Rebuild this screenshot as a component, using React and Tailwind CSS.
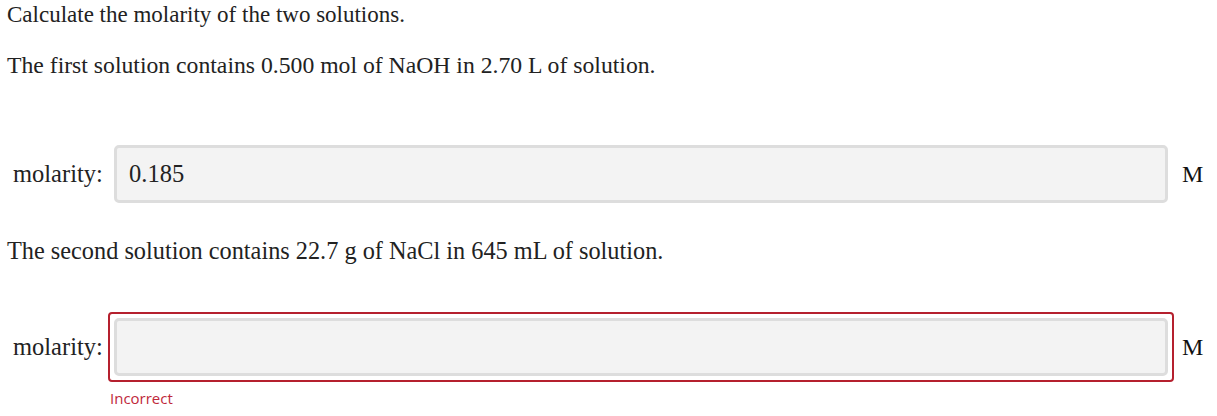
import React from 'react';

const serif = { fontFamily: '"Liberation Serif", "Times New Roman", serif' };

const AnswerRow = ({ value, incorrect }) => {
  return (
    <div className="flex flex-col">
      <div className="flex items-center">
        <label className="w-[108px] shrink-0 pl-[13px] text-[24.5px] text-[#222]">molarity:</label>
        <div
          className={
            'flex-1 rounded-[4px] border-2 p-1 ' +
            (incorrect ? 'border-[#b5202e]' : 'border-transparent')
          }
        >
          <input
            type="text"
            defaultValue={value}
            className="block h-[58px] w-full rounded-[5px] border-[3px] border-[#dddddd] bg-[#f3f3f3] px-3 text-[24.5px] text-[#222] outline-none"
            style={serif}
          />
        </div>
        <span className="w-[43px] shrink-0 pl-2 text-[24px] text-[#111]">M</span>
      </div>
      {incorrect && (
        <div className="pl-[110px] pt-[8px] text-[15px] leading-[16px] text-[#c0283a]" style={{ fontFamily: '"Open Sans", "Liberation Sans", sans-serif' }}>
          Incorrect
        </div>
      )}
    </div>
  );
};

const App = () => {
  return (
    <div className="w-[1217px] h-[416px] bg-white overflow-hidden" style={serif}>
      <p className="pl-[7px] text-[23px] leading-[30px] text-[#222]">Calculate the molarity of the two solutions.</p>
      <p className="mt-[20px] pl-[7px] text-[23.7px] leading-[30px] text-[#222]">
        The first solution contains 0.500 mol of NaOH in 2.70 L of solution.
      </p>

      <div className="mt-[59px]">
        <AnswerRow value="0.185" />
      </div>

      <p className="mt-[27px] pl-[7px] text-[24.3px] leading-[30px] text-[#222]">
        The second solution contains 22.7 g of NaCl in 645 mL of solution.
      </p>

      <div className="mt-[46px]">
        <AnswerRow value="" incorrect />
      </div>
    </div>
  );
};

export default App;
